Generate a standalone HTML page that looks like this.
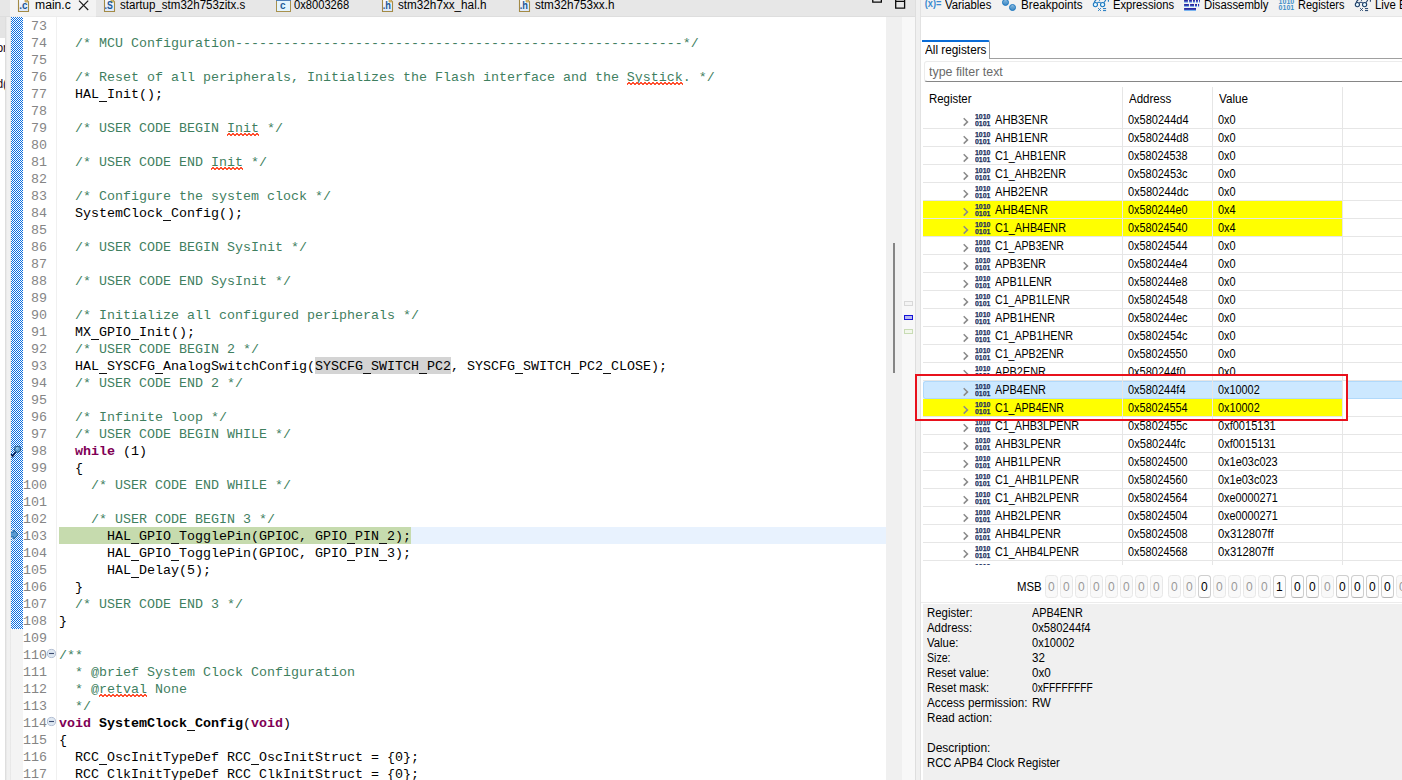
<!DOCTYPE html>
<html>
<head>
<meta charset="utf-8">
<title>IDE</title>
<style>
html,body{margin:0;padding:0;overflow:hidden;}
#root{position:relative;width:1402px;height:780px;overflow:hidden;background:#fff;}
body{width:1402px;height:780px;position:relative;overflow:hidden;background:#fff;
 font-family:"Liberation Sans",sans-serif;font-size:12px;color:#000;}
div,span{box-sizing:border-box;}
.abs{position:absolute;}

/* ---------- left editor ---------- */
#edtabs{position:absolute;left:0;top:0;width:916px;height:17px;background:#e7e7e7;border-bottom:1px solid #dedede;}
#acttab{position:absolute;left:10px;top:0;width:86px;height:17px;background:#f3f3f3;border-bottom:1px solid #ececec;}
.tt{position:absolute;top:-3px;font-size:12.4px;line-height:16px;white-space:nowrap;color:#000;}
#leftw{position:absolute;left:0;top:38.5px;width:5px;height:742px;background:#fff;}
#leftg{position:absolute;left:0;top:17px;width:5px;height:21px;background:#e4e4e4;}
#leftm{position:absolute;left:5px;top:17px;width:18px;height:763px;background:linear-gradient(90deg,#d6d6d6 0,#e6e6e6 1px,#f1f1f1 2.5px,#f1f1f1 4.6px,#e6e6e6 5.4px,#f4f4f4 6px,#f4f4f4 100%);}
#hatch{position:absolute;left:11px;top:17px;width:12px;height:612px;
 background-color:#fff;
 background-image:conic-gradient(#0a6ee2 25%, #ffffff 0 50%, #0a6ee2 0 75%, #ffffff 0);
 background-size:2px 2px;background-position:1px 0;}
#editor{position:absolute;left:23px;top:17px;width:863px;height:763px;background:#fff;}
.ln,.cl{position:absolute;font-family:"Liberation Mono",monospace;font-size:13.333px;line-height:17px;height:17px;white-space:pre;}
.ln{left:15px;width:32px;text-align:right;color:#858585;}
.cl{left:59px;color:#000;}
.c{color:#3f7f5f;}
.k{color:#7f0055;font-weight:bold;}
.cl b{font-weight:bold;}
.occ{background:#d4d4d4;padding-top:2px;}
.u{color:transparent;padding-bottom:3px;background:linear-gradient(currentColor,currentColor) no-repeat 0 14.1px/8px 1.4px;}
.cl .u{background-image:linear-gradient(#111,#111);}
.sq{text-decoration:underline wavy #e02020 1px;text-underline-offset:2px;text-decoration-skip-ink:none;}
#curline{position:absolute;left:59px;top:527px;width:827px;height:17px;background:#e8f2fe;}
#ipline{position:absolute;left:59px;top:527px;width:352px;height:17px;background:#c6dbae;}
#lnsep{position:absolute;left:56px;top:17px;width:1px;height:764px;background:#f0f0f0;}
#vscroll{position:absolute;left:886px;top:17px;width:16px;height:764px;background:#f0f0f0;}
#thumb{position:absolute;left:893px;top:243px;width:2px;height:130px;background:#858585;}
#ovr{position:absolute;left:902px;top:17px;width:13px;height:764px;background:#f8f8f8;}
.om{position:absolute;left:904px;width:9px;height:5px;}
#sash{position:absolute;left:915px;top:0;width:6px;height:780px;background:#f0f0f0;border-left:1px solid #dedede;border-right:1px solid #e2e2e2;}

/* ---------- right panel ---------- */
#rtabs{position:absolute;left:921px;top:0;width:481px;height:17px;background:#f2f2f2;border-bottom:1px solid #e6e6e6;}
#rp{position:absolute;left:921px;top:16px;width:481px;height:764px;background:#fff;}
#alltab{position:absolute;left:921.8px;top:39.5px;width:68.2px;height:19.5px;border-top-right-radius:2px;background:#fff;border-top:2px solid #0a6cd6;border-right:1px solid #a0a0a0;}
#alltabline{position:absolute;left:989px;top:58px;width:413px;height:1px;background:#a0a0a0;}
#filter{position:absolute;left:923.5px;top:61px;width:480px;height:21px;border:1px solid #ececec;border-bottom:1px solid #868686;border-radius:3px;background:#fff;}
.st{position:absolute;white-space:pre;font-size:12px;line-height:15px;height:15px;transform-origin:0 50%;}
.hd{position:absolute;top:91px;white-space:nowrap;font-size:12px;line-height:15px;}
.vl{position:absolute;top:87px;width:1px;height:479px;background:#e6e6e6;}
.rr{position:absolute;left:923px;width:479px;height:18px;border-bottom:1px solid #e6e6e6;}
.rr.yel{background:linear-gradient(#ffff00,#ffff00) no-repeat 0 0/419px 17px;}
.rr.sel{background:#cce8ff;border:1px solid #b0d9fb;border-right:none;border-radius:2.5px 0 0 2.5px;height:18px;}
.abs svg{display:block;}
#tblclip{position:absolute;left:0;top:0;width:1402px;height:567px;overflow:hidden;}
#redbox{position:absolute;left:921px;top:376px;width:425px;height:43px;background:#fff;overflow:hidden;}
#redfr{position:absolute;left:915px;top:374px;width:433px;height:47px;border:2px solid #e8111c;}
#redin{position:absolute;left:-921px;top:-376px;width:1402px;height:780px;}
#redin .rr{width:419px;}
#bitrow{position:absolute;left:921px;top:565px;width:481px;height:38px;background:#fff;}
.bit{position:absolute;top:575px;width:12.5px;height:23px;border:1px solid #e8e8e8;border-radius:3.5px;background:#f9f9f9;color:#9a9a9a;font-size:12px;line-height:15px;padding-top:4px;text-align:center;overflow:hidden;}
.bit.en{border-color:#cfcfcf;border-bottom-color:#b4b4b4;background:#fdfdfd;color:#000;}
#det{position:absolute;left:921px;top:602px;width:481px;height:178px;background:#fff;border-top:1px solid #ececec;}
#det2{position:absolute;left:923px;top:604px;width:479px;height:176px;background:#f0f0f0;}
.dl{position:absolute;white-space:nowrap;font-size:12px;line-height:15px;}
</style>
</head>
<body>
<div id="root">

<!-- ===== editor tab bar ===== -->
<div id="edtabs"></div>
<div id="acttab"></div>
<div id="edtabtext">
<svg class="abs" style="left:17px;top:0" width="13" height="13" viewBox="0 0 13 13"><defs><linearGradient id="fg17" x1="0" y1="0" x2="0" y2="1"><stop offset="0" stop-color="#fbfcff"/><stop offset="1" stop-color="#dbe7fa"/></linearGradient></defs><path d="M1.5 -1 H8.5 L11.5 1.8 V11.5 H1.5 Z" fill="url(#fg17)" stroke="#a38a45" stroke-width="1.1"/><path d="M8 -1 V2 H11.5" fill="#d9b96a" stroke="#c4a254" stroke-width="0.8"/><text x="2.2" y="9" font-family="Liberation Sans" font-size="10.5" font-weight="bold" fill="#1a5796" textLength="8.2" lengthAdjust="spacingAndGlyphs">.c</text></svg>
<svg class="abs" style="left:78px;top:0" width="12" height="11" viewBox="0 0 12 11"><path d="M1 0.6 L10.2 10 M10.2 0.6 L1 10" stroke="#1a1a1a" stroke-width="1.15" fill="none"/></svg>
<svg class="abs" style="left:103px;top:0" width="13" height="13" viewBox="0 0 13 13"><defs><linearGradient id="fg103" x1="0" y1="0" x2="0" y2="1"><stop offset="0" stop-color="#fbfcff"/><stop offset="1" stop-color="#dbe7fa"/></linearGradient></defs><path d="M1.5 -1 H8.5 L11.5 1.8 V11.5 H1.5 Z" fill="url(#fg103)" stroke="#a38a45" stroke-width="1.1"/><path d="M8 -1 V2 H11.5" fill="#d9b96a" stroke="#c4a254" stroke-width="0.8"/><text x="1.6" y="9" font-family="Liberation Sans" font-size="10.5" font-weight="bold" fill="#1a5796" textLength="8.2" lengthAdjust="spacingAndGlyphs">.S</text></svg>
<svg class="abs" style="left:275px;top:0" width="17" height="13" viewBox="0 0 17 13"><rect x="1.5" y="0" width="14" height="11.5" fill="#e4f4fc" stroke="#a8914e" stroke-width="1"/><rect x="1" y="-1" width="15" height="2" fill="#4f7fb8"/><text x="5" y="9" font-family="Liberation Sans" font-size="10" font-weight="bold" fill="#1f5c99">c</text></svg>
<svg class="abs" style="left:381px;top:0" width="13" height="13" viewBox="0 0 13 13"><defs><linearGradient id="fg381" x1="0" y1="0" x2="0" y2="1"><stop offset="0" stop-color="#fbfcff"/><stop offset="1" stop-color="#dbe7fa"/></linearGradient></defs><path d="M1.5 -1 H8.5 L11.5 1.8 V11.5 H1.5 Z" fill="url(#fg381)" stroke="#a38a45" stroke-width="1.1"/><path d="M8 -1 V2 H11.5" fill="#d9b96a" stroke="#c4a254" stroke-width="0.8"/><text x="1.8" y="9" font-family="Liberation Sans" font-size="10.5" font-weight="bold" fill="#1a5796" textLength="8.2" lengthAdjust="spacingAndGlyphs">.h</text></svg>
<svg class="abs" style="left:518px;top:0" width="13" height="13" viewBox="0 0 13 13"><defs><linearGradient id="fg518" x1="0" y1="0" x2="0" y2="1"><stop offset="0" stop-color="#fbfcff"/><stop offset="1" stop-color="#dbe7fa"/></linearGradient></defs><path d="M1.5 -1 H8.5 L11.5 1.8 V11.5 H1.5 Z" fill="url(#fg518)" stroke="#a38a45" stroke-width="1.1"/><path d="M8 -1 V2 H11.5" fill="#d9b96a" stroke="#c4a254" stroke-width="0.8"/><text x="1.8" y="9" font-family="Liberation Sans" font-size="10.5" font-weight="bold" fill="#1a5796" textLength="8.2" lengthAdjust="spacingAndGlyphs">.h</text></svg>
<svg class="abs" style="left:871px;top:0" width="13" height="5" viewBox="0 0 13 5"><path d="M1.75 -1 V2.05 H10.35 V-1" fill="none" stroke="#0a0a0a" stroke-width="1.3"/></svg>
<svg class="abs" style="left:894px;top:0" width="13" height="11" viewBox="0 0 13 11"><path d="M1.7 -1 V8.2 H10.6 V-1 M1.7 1.4 H10.6" fill="none" stroke="#0a0a0a" stroke-width="1.3"/></svg>
</div>

<!-- ===== left gutter ===== -->
<div id="leftw"></div>
<div id="leftg"></div>
<div class="st" style="left:-3.6px;top:41px;width:8.6px;overflow:hidden;color:#1a0a18;">or</div>
<div class="st" style="left:-3.6px;top:77px;width:8.6px;overflow:hidden;color:#1a0a18;">d(</div>
<div id="leftm"></div>

<!-- ===== editor body ===== -->
<div id="editor"></div>
<div id="hatch"></div>
<div id="lnsep"></div>
<div id="curline"></div>
<div id="ipline"></div>
<div class="ln" style="top:18px">73</div>
<div class="ln" style="top:35px">74</div>
<div class="cl" style="top:35px">  <span class="c">/* MCU Configuration--------------------------------------------------------*/</span></div>
<div class="ln" style="top:52px">75</div>
<div class="ln" style="top:69px">76</div>
<div class="cl" style="top:69px">  <span class="c">/* Reset of all peripherals, Initializes the Flash interface and the Systick. */</span></div>
<div class="ln" style="top:86px">77</div>
<div class="cl" style="top:86px">  HAL<span class="u">_</span>Init();</div>
<div class="ln" style="top:103px">78</div>
<div class="ln" style="top:120px">79</div>
<div class="cl" style="top:120px">  <span class="c">/* USER CODE BEGIN Init */</span></div>
<div class="ln" style="top:137px">80</div>
<div class="ln" style="top:154px">81</div>
<div class="cl" style="top:154px">  <span class="c">/* USER CODE END Init */</span></div>
<div class="ln" style="top:171px">82</div>
<div class="ln" style="top:188px">83</div>
<div class="cl" style="top:188px">  <span class="c">/* Configure the system clock */</span></div>
<div class="ln" style="top:205px">84</div>
<div class="cl" style="top:205px">  SystemClock<span class="u">_</span>Config();</div>
<div class="ln" style="top:222px">85</div>
<div class="ln" style="top:239px">86</div>
<div class="cl" style="top:239px">  <span class="c">/* USER CODE BEGIN SysInit */</span></div>
<div class="ln" style="top:256px">87</div>
<div class="ln" style="top:273px">88</div>
<div class="cl" style="top:273px">  <span class="c">/* USER CODE END SysInit */</span></div>
<div class="ln" style="top:290px">89</div>
<div class="ln" style="top:307px">90</div>
<div class="cl" style="top:307px">  <span class="c">/* Initialize all configured peripherals */</span></div>
<div class="ln" style="top:324px">91</div>
<div class="cl" style="top:324px">  MX<span class="u">_</span>GPIO<span class="u">_</span>Init();</div>
<div class="ln" style="top:341px">92</div>
<div class="cl" style="top:341px">  <span class="c">/* USER CODE BEGIN 2 */</span></div>
<div class="ln" style="top:358px">93</div>
<div class="cl" style="top:358px">  HAL<span class="u">_</span>SYSCFG<span class="u">_</span>AnalogSwitchConfig(<span class="occ">SYSCFG<span class="u">_</span>SWITCH<span class="u">_</span>PC2</span>, SYSCFG<span class="u">_</span>SWITCH<span class="u">_</span>PC2<span class="u">_</span>CLOSE);</div>
<div class="ln" style="top:375px">94</div>
<div class="cl" style="top:375px">  <span class="c">/* USER CODE END 2 */</span></div>
<div class="ln" style="top:392px">95</div>
<div class="ln" style="top:409px">96</div>
<div class="cl" style="top:409px">  <span class="c">/* Infinite loop */</span></div>
<div class="ln" style="top:426px">97</div>
<div class="cl" style="top:426px">  <span class="c">/* USER CODE BEGIN WHILE */</span></div>
<div class="ln" style="top:443px">98</div>
<div class="cl" style="top:443px">  <span class="k">while</span> (1)</div>
<div class="ln" style="top:460px">99</div>
<div class="cl" style="top:460px">  {</div>
<div class="ln" style="top:477px">100</div>
<div class="cl" style="top:477px">    <span class="c">/* USER CODE END WHILE */</span></div>
<div class="ln" style="top:494px">101</div>
<div class="ln" style="top:511px">102</div>
<div class="cl" style="top:511px">    <span class="c">/* USER CODE BEGIN 3 */</span></div>
<div class="ln" style="top:528px">103</div>
<div class="cl" style="top:528px">      HAL<span class="u">_</span>GPIO<span class="u">_</span>TogglePin(GPIOC, GPIO<span class="u">_</span>PIN<span class="u">_</span>2);</div>
<div class="ln" style="top:545px">104</div>
<div class="cl" style="top:545px">      HAL<span class="u">_</span>GPIO<span class="u">_</span>TogglePin(GPIOC, GPIO<span class="u">_</span>PIN<span class="u">_</span>3);</div>
<div class="ln" style="top:562px">105</div>
<div class="cl" style="top:562px">      HAL<span class="u">_</span>Delay(5);</div>
<div class="ln" style="top:579px">106</div>
<div class="cl" style="top:579px">  }</div>
<div class="ln" style="top:596px">107</div>
<div class="cl" style="top:596px">  <span class="c">/* USER CODE END 3 */</span></div>
<div class="ln" style="top:613px">108</div>
<div class="cl" style="top:613px">}</div>
<div class="ln" style="top:630px">109</div>
<div class="ln" style="top:647px">110</div>
<div class="cl" style="top:647px"><span class="c">/**</span></div>
<div class="ln" style="top:664px">111</div>
<div class="cl" style="top:664px">  <span class="c">* @brief System Clock Configuration</span></div>
<div class="ln" style="top:681px">112</div>
<div class="cl" style="top:681px">  <span class="c">* @retval None</span></div>
<div class="ln" style="top:698px">113</div>
<div class="cl" style="top:698px">  <span class="c">*/</span></div>
<div class="ln" style="top:715px">114</div>
<div class="cl" style="top:715px"><span class="k">void</span> <b>SystemClock<span class="u">_</span>Config</b>(<span class="k">void</span>)</div>
<div class="ln" style="top:732px">115</div>
<div class="cl" style="top:732px">{</div>
<div class="ln" style="top:749px">116</div>
<div class="cl" style="top:749px">  RCC<span class="u">_</span>OscInitTypeDef RCC<span class="u">_</span>OscInitStruct = {0};</div>
<div class="ln" style="top:766px">117</div>
<div class="cl" style="top:766px">  RCC<span class="u">_</span>ClkInitTypeDef RCC<span class="u">_</span>ClkInitStruct = {0};</div>
<svg class="abs" style="left:627px;top:82px" width="57" height="4" viewBox="0 0 57 4"><polyline points="0,2.6 2,0.6 4,2.6 6,0.6 8,2.6 10,0.6 12,2.6 14,0.6 16,2.6 18,0.6 20,2.6 22,0.6 24,2.6 26,0.6 28,2.6 30,0.6 32,2.6 34,0.6 36,2.6 38,0.6 40,2.6 42,0.6 44,2.6 46,0.6 48,2.6 50,0.6 52,2.6 54,0.6 56,2.6" fill="none" stroke="#ff5030" stroke-width="1" shape-rendering="crispEdges"/></svg>
<svg class="abs" style="left:227px;top:133px" width="33" height="4" viewBox="0 0 33 4"><polyline points="0,2.6 2,0.6 4,2.6 6,0.6 8,2.6 10,0.6 12,2.6 14,0.6 16,2.6 18,0.6 20,2.6 22,0.6 24,2.6 26,0.6 28,2.6 30,0.6 32,2.6" fill="none" stroke="#ff5030" stroke-width="1" shape-rendering="crispEdges"/></svg>
<svg class="abs" style="left:211px;top:167px" width="33" height="4" viewBox="0 0 33 4"><polyline points="0,2.6 2,0.6 4,2.6 6,0.6 8,2.6 10,0.6 12,2.6 14,0.6 16,2.6 18,0.6 20,2.6 22,0.6 24,2.6 26,0.6 28,2.6 30,0.6 32,2.6" fill="none" stroke="#ff5030" stroke-width="1" shape-rendering="crispEdges"/></svg>
<svg class="abs" style="left:99px;top:694px" width="49" height="4" viewBox="0 0 49 4"><polyline points="0,2.6 2,0.6 4,2.6 6,0.6 8,2.6 10,0.6 12,2.6 14,0.6 16,2.6 18,0.6 20,2.6 22,0.6 24,2.6 26,0.6 28,2.6 30,0.6 32,2.6 34,0.6 36,2.6 38,0.6 40,2.6 42,0.6 44,2.6 46,0.6 48,2.6" fill="none" stroke="#ff5030" stroke-width="1" shape-rendering="crispEdges"/></svg>

<!-- fold icons -->
<svg class="abs" style="left:46px;top:648px" width="11" height="11" viewBox="0 0 11 11"><circle cx="5.45" cy="5.5" r="4.1" fill="#dfe8f2" stroke="#aab7cd" stroke-width="0.9"/><path d="M3 5.5 H8" stroke="#3a4a70" stroke-width="1.1"/></svg>
<svg class="abs" style="left:46px;top:716px" width="11" height="11" viewBox="0 0 11 11"><circle cx="5.45" cy="5.5" r="4.1" fill="#dfe8f2" stroke="#aab7cd" stroke-width="0.9"/><path d="M3 5.5 H8" stroke="#3a4a70" stroke-width="1.1"/></svg>

<!-- gutter icons -->
<svg class="abs" style="left:10px;top:443px" width="14" height="15" viewBox="0 0 14 15"><circle cx="7.6" cy="6.2" r="3.1" fill="#5c9fd0" stroke="#1f4f80" stroke-width="1"/><circle cx="7.1" cy="5.5" r="1.2" fill="#8fc0e4"/><path d="M1.2 11.2 L2.6 13.4 L5.6 9" fill="none" stroke="#0f2050" stroke-width="1.5"/></svg>
<svg class="abs" style="left:11px;top:528px" width="10" height="13" viewBox="0 0 10 13"><path d="M-1 4 H2.8 V1.6 L7.4 6.5 L2.8 11.4 V9 H-1 Z" fill="#5a9ad0" stroke="#fff" stroke-width="2.2"/><path d="M-1 4 H2.8 V1.6 L7.4 6.5 L2.8 11.4 V9 H-1 Z" fill="#5a9ad0" stroke="#0a5aa0" stroke-width="1"/></svg>

<div id="vscroll"></div>
<div id="thumb"></div>
<div id="ovr"></div>
<div class="om" style="top:301px;border:1px solid #d8d8d8;background:#f4f4f4"></div>
<div class="om" style="top:315px;border:1px solid #1414d8;background:#b8b8f0"></div>
<div class="om" style="top:329px;border:1px solid #c8dcb4;background:#f2f7ec"></div>
<div id="sash"></div>

<!-- ===== right panel ===== -->
<div id="rp"></div>
<div id="rtabs"></div>
<div id="rtabtext">
<svg class="abs" style="left:996px;top:0" width="24" height="13" viewBox="0 0 24 13"><defs><linearGradient id="bpg" x1="0" y1="0" x2="0" y2="1"><stop offset="0" stop-color="#9cc4e4"/><stop offset="0.5" stop-color="#5f9fd0"/><stop offset="1" stop-color="#3f88c4"/></linearGradient></defs><circle cx="9.5" cy="2.4" r="3" fill="url(#bpg)" stroke="#1c78c0" stroke-width="1"/><circle cx="16.5" cy="7.5" r="3" fill="url(#bpg)" stroke="#1c78c0" stroke-width="1"/></svg>
<svg class="abs" style="left:1088px;top:0" width="24" height="13" viewBox="0 0 24 13"><g fill="#e6f8ff" stroke="#1c78c0" stroke-width="1.1"><circle cx="7.4" cy="4.6" r="2.1"/><circle cx="14.6" cy="4.6" r="2.1"/></g><g fill="none" stroke="#1c78c0" stroke-width="1.1"><path d="M9.3 2.6 Q11 1.9 12.7 2.6 M6.2 2.6 Q7 0.4 8.6 -0.6 M15.8 2.6 Q17.4 1.2 17.8 -0.6 M11.5 -1 V0.8 M20.4 -1 V1.8"/><path d="M10.2 8.2 L12.8 10.8 M12.8 8.2 L10.2 10.8" stroke-width="1"/><path d="M15 8.6 H18.1 M15 10.6 H18.1" stroke-width="1"/></g></svg>
<svg class="abs" style="left:1178px;top:0" width="24" height="13" viewBox="0 0 24 13"><g fill="#7ab4f0"><rect x="6.1" y="0.8" width="3.8" height="2"/><rect x="11.1" y="0.8" width="2.8" height="2"/><rect x="15" y="0.8" width="1.9" height="2"/><rect x="18" y="0.8" width="1.9" height="2"/><rect x="21.1" y="0.8" width="0.9" height="2"/><rect x="6.1" y="4.8" width="4.8" height="2.2"/><rect x="12.1" y="4.8" width="3.9" height="2.2"/><rect x="17" y="4.8" width="2" height="2.2"/><rect x="20" y="4.8" width="1.1" height="2.2"/><rect x="6.1" y="8.8" width="11.9" height="2.2"/></g><g fill="#2a2aa0"><rect x="6.1" y="0" width="3.8" height="1.6"/><rect x="11.1" y="0" width="2.8" height="1.6"/><rect x="15" y="0" width="1.9" height="1.6"/><rect x="18" y="0" width="1.9" height="1.6"/><rect x="21.1" y="0" width="0.9" height="1.6"/><rect x="6.1" y="4" width="4.8" height="1.8"/><rect x="12.1" y="4" width="3.9" height="1.8"/><rect x="17" y="4" width="2" height="1.8"/><rect x="20" y="4" width="1.1" height="1.8"/><rect x="6.1" y="8" width="11.9" height="1.8"/></g></svg>
<svg class="abs" style="left:1274px;top:0" width="24" height="13" viewBox="0 0 24 13"><g font-family="Liberation Sans" font-size="7" font-weight="bold" fill="#3d8fc8"><text x="4.6" y="4" textLength="15.6" lengthAdjust="spacingAndGlyphs">1010</text><text x="4.6" y="10" textLength="15.6" lengthAdjust="spacingAndGlyphs">0101</text></g></svg>
<svg class="abs" style="left:1350px;top:0" width="24" height="13" viewBox="0 0 24 13"><g fill="#e6f8ff" stroke="#1f3f68" stroke-width="1.1"><circle cx="7.4" cy="4.6" r="2.1"/><circle cx="14.6" cy="4.6" r="2.1"/></g><g fill="none" stroke="#1f3f68" stroke-width="1.1"><path d="M9.3 2.6 Q11 1.9 12.7 2.6 M6.2 2.6 Q7 0.4 8.6 -0.6 M15.8 2.6 Q17.4 1.2 17.8 -0.6 M11.5 -1 V0.8 M20.4 -1 V1.8"/><path d="M10.2 8.2 L12.8 10.8 M12.8 8.2 L10.2 10.8" stroke-width="1"/><path d="M15 8.6 H18.1 M15 10.6 H18.1" stroke-width="1"/></g></svg>
</div>

<div id="alltab"></div>
<div id="alltabline"></div>
<div id="filter"></div>

<div id="tblclip">
<div class="rr" style="top:111px"></div><div class="abs" style="left:963px;top:116.5px"><svg class="ch" width="7" height="10" viewBox="0 0 7 10"><path d="M0.7 1.2 L4.5 4.9 L0.7 8.6" fill="none" stroke="#8a8a8a" stroke-width="1.5"/></svg></div><div class="abs" style="left:975px;top:114px"><svg class="ri" width="17" height="13" viewBox="0 0 17 13"><g font-family="Liberation Sans" font-size="7" font-weight="bold" fill="#1c315e" stroke="#1c315e" stroke-width="0.25"><text x="0" y="5" textLength="15.4" lengthAdjust="spacingAndGlyphs">1010</text><text x="0" y="11.6" textLength="15.4" lengthAdjust="spacingAndGlyphs">0101</text></g></svg></div><div class="st" style="left:994.5px;top:113px;transform:scaleX(0.9350);">AHB3ENR</div><div class="st" style="left:1128.1px;top:113px;transform:scaleX(0.9156);">0x580244d4</div><div class="st" style="left:1218.0px;top:113px;transform:scaleX(0.9143);">0x0</div>
<div class="rr" style="top:129px"></div><div class="abs" style="left:963px;top:134.5px"><svg class="ch" width="7" height="10" viewBox="0 0 7 10"><path d="M0.7 1.2 L4.5 4.9 L0.7 8.6" fill="none" stroke="#8a8a8a" stroke-width="1.5"/></svg></div><div class="abs" style="left:975px;top:132px"><svg class="ri" width="17" height="13" viewBox="0 0 17 13"><g font-family="Liberation Sans" font-size="7" font-weight="bold" fill="#1c315e" stroke="#1c315e" stroke-width="0.25"><text x="0" y="5" textLength="15.4" lengthAdjust="spacingAndGlyphs">1010</text><text x="0" y="11.6" textLength="15.4" lengthAdjust="spacingAndGlyphs">0101</text></g></svg></div><div class="st" style="left:994.5px;top:131px;transform:scaleX(0.9350);">AHB1ENR</div><div class="st" style="left:1128.1px;top:131px;transform:scaleX(0.9156);">0x580244d8</div><div class="st" style="left:1218.0px;top:131px;transform:scaleX(0.9143);">0x0</div>
<div class="rr" style="top:147px"></div><div class="abs" style="left:963px;top:152.5px"><svg class="ch" width="7" height="10" viewBox="0 0 7 10"><path d="M0.7 1.2 L4.5 4.9 L0.7 8.6" fill="none" stroke="#8a8a8a" stroke-width="1.5"/></svg></div><div class="abs" style="left:975px;top:150px"><svg class="ri" width="17" height="13" viewBox="0 0 17 13"><g font-family="Liberation Sans" font-size="7" font-weight="bold" fill="#1c315e" stroke="#1c315e" stroke-width="0.25"><text x="0" y="5" textLength="15.4" lengthAdjust="spacingAndGlyphs">1010</text><text x="0" y="11.6" textLength="15.4" lengthAdjust="spacingAndGlyphs">0101</text></g></svg></div><div class="st" style="left:994.5px;top:149px;transform:scaleX(0.9021);">C1_AHB1ENR</div><div class="st" style="left:1128.1px;top:149px;transform:scaleX(0.9004);">0x58024538</div><div class="st" style="left:1218.0px;top:149px;transform:scaleX(0.9143);">0x0</div>
<div class="rr" style="top:165px"></div><div class="abs" style="left:963px;top:170.5px"><svg class="ch" width="7" height="10" viewBox="0 0 7 10"><path d="M0.7 1.2 L4.5 4.9 L0.7 8.6" fill="none" stroke="#8a8a8a" stroke-width="1.5"/></svg></div><div class="abs" style="left:975px;top:168px"><svg class="ri" width="17" height="13" viewBox="0 0 17 13"><g font-family="Liberation Sans" font-size="7" font-weight="bold" fill="#1c315e" stroke="#1c315e" stroke-width="0.25"><text x="0" y="5" textLength="15.4" lengthAdjust="spacingAndGlyphs">1010</text><text x="0" y="11.6" textLength="15.4" lengthAdjust="spacingAndGlyphs">0101</text></g></svg></div><div class="st" style="left:994.5px;top:167px;transform:scaleX(0.9021);">C1_AHB2ENR</div><div class="st" style="left:1128.1px;top:167px;transform:scaleX(0.9099);">0x5802453c</div><div class="st" style="left:1218.0px;top:167px;transform:scaleX(0.9143);">0x0</div>
<div class="rr" style="top:183px"></div><div class="abs" style="left:963px;top:188.5px"><svg class="ch" width="7" height="10" viewBox="0 0 7 10"><path d="M0.7 1.2 L4.5 4.9 L0.7 8.6" fill="none" stroke="#8a8a8a" stroke-width="1.5"/></svg></div><div class="abs" style="left:975px;top:186px"><svg class="ri" width="17" height="13" viewBox="0 0 17 13"><g font-family="Liberation Sans" font-size="7" font-weight="bold" fill="#1c315e" stroke="#1c315e" stroke-width="0.25"><text x="0" y="5" textLength="15.4" lengthAdjust="spacingAndGlyphs">1010</text><text x="0" y="11.6" textLength="15.4" lengthAdjust="spacingAndGlyphs">0101</text></g></svg></div><div class="st" style="left:994.5px;top:185px;transform:scaleX(0.9350);">AHB2ENR</div><div class="st" style="left:1128.1px;top:185px;transform:scaleX(0.9252);">0x580244dc</div><div class="st" style="left:1218.0px;top:185px;transform:scaleX(0.9143);">0x0</div>
<div class="rr yel" style="top:201px"></div><div class="abs" style="left:963px;top:206.5px"><svg class="ch" width="7" height="10" viewBox="0 0 7 10"><path d="M0.7 1.2 L4.5 4.9 L0.7 8.6" fill="none" stroke="#8a8a8a" stroke-width="1.5"/></svg></div><div class="abs" style="left:975px;top:204px"><svg class="ri" width="17" height="13" viewBox="0 0 17 13"><g font-family="Liberation Sans" font-size="7" font-weight="bold" fill="#1c315e" stroke="#1c315e" stroke-width="0.25"><text x="0" y="5" textLength="15.4" lengthAdjust="spacingAndGlyphs">1010</text><text x="0" y="11.6" textLength="15.4" lengthAdjust="spacingAndGlyphs">0101</text></g></svg></div><div class="st" style="left:994.5px;top:203px;transform:scaleX(0.9350);">AHB4ENR</div><div class="st" style="left:1128.1px;top:203px;transform:scaleX(0.9004);">0x580244e0</div><div class="st" style="left:1218.0px;top:203px;transform:scaleX(0.9143);">0x4</div>
<div class="rr yel" style="top:219px"></div><div class="abs" style="left:963px;top:224.5px"><svg class="ch" width="7" height="10" viewBox="0 0 7 10"><path d="M0.7 1.2 L4.5 4.9 L0.7 8.6" fill="none" stroke="#8a8a8a" stroke-width="1.5"/></svg></div><div class="abs" style="left:975px;top:222px"><svg class="ri" width="17" height="13" viewBox="0 0 17 13"><g font-family="Liberation Sans" font-size="7" font-weight="bold" fill="#1c315e" stroke="#1c315e" stroke-width="0.25"><text x="0" y="5" textLength="15.4" lengthAdjust="spacingAndGlyphs">1010</text><text x="0" y="11.6" textLength="15.4" lengthAdjust="spacingAndGlyphs">0101</text></g></svg></div><div class="st" style="left:994.5px;top:221px;transform:scaleX(0.9021);">C1_AHB4ENR</div><div class="st" style="left:1128.1px;top:221px;transform:scaleX(0.9004);">0x58024540</div><div class="st" style="left:1218.0px;top:221px;transform:scaleX(0.9143);">0x4</div>
<div class="rr" style="top:237px"></div><div class="abs" style="left:963px;top:242.5px"><svg class="ch" width="7" height="10" viewBox="0 0 7 10"><path d="M0.7 1.2 L4.5 4.9 L0.7 8.6" fill="none" stroke="#8a8a8a" stroke-width="1.5"/></svg></div><div class="abs" style="left:975px;top:240px"><svg class="ri" width="17" height="13" viewBox="0 0 17 13"><g font-family="Liberation Sans" font-size="7" font-weight="bold" fill="#1c315e" stroke="#1c315e" stroke-width="0.25"><text x="0" y="5" textLength="15.4" lengthAdjust="spacingAndGlyphs">1010</text><text x="0" y="11.6" textLength="15.4" lengthAdjust="spacingAndGlyphs">0101</text></g></svg></div><div class="st" style="left:994.5px;top:239px;transform:scaleX(0.8841);">C1_APB3ENR</div><div class="st" style="left:1128.1px;top:239px;transform:scaleX(0.9004);">0x58024544</div><div class="st" style="left:1218.0px;top:239px;transform:scaleX(0.9143);">0x0</div>
<div class="rr" style="top:255px"></div><div class="abs" style="left:963px;top:260.5px"><svg class="ch" width="7" height="10" viewBox="0 0 7 10"><path d="M0.7 1.2 L4.5 4.9 L0.7 8.6" fill="none" stroke="#8a8a8a" stroke-width="1.5"/></svg></div><div class="abs" style="left:975px;top:258px"><svg class="ri" width="17" height="13" viewBox="0 0 17 13"><g font-family="Liberation Sans" font-size="7" font-weight="bold" fill="#1c315e" stroke="#1c315e" stroke-width="0.25"><text x="0" y="5" textLength="15.4" lengthAdjust="spacingAndGlyphs">1010</text><text x="0" y="11.6" textLength="15.4" lengthAdjust="spacingAndGlyphs">0101</text></g></svg></div><div class="st" style="left:994.5px;top:257px;transform:scaleX(0.9102);">APB3ENR</div><div class="st" style="left:1128.1px;top:257px;transform:scaleX(0.9004);">0x580244e4</div><div class="st" style="left:1218.0px;top:257px;transform:scaleX(0.9143);">0x0</div>
<div class="rr" style="top:273px"></div><div class="abs" style="left:963px;top:278.5px"><svg class="ch" width="7" height="10" viewBox="0 0 7 10"><path d="M0.7 1.2 L4.5 4.9 L0.7 8.6" fill="none" stroke="#8a8a8a" stroke-width="1.5"/></svg></div><div class="abs" style="left:975px;top:276px"><svg class="ri" width="17" height="13" viewBox="0 0 17 13"><g font-family="Liberation Sans" font-size="7" font-weight="bold" fill="#1c315e" stroke="#1c315e" stroke-width="0.25"><text x="0" y="5" textLength="15.4" lengthAdjust="spacingAndGlyphs">1010</text><text x="0" y="11.6" textLength="15.4" lengthAdjust="spacingAndGlyphs">0101</text></g></svg></div><div class="st" style="left:994.5px;top:275px;transform:scaleX(0.9090);">APB1LENR</div><div class="st" style="left:1128.1px;top:275px;transform:scaleX(0.9004);">0x580244e8</div><div class="st" style="left:1218.0px;top:275px;transform:scaleX(0.9143);">0x0</div>
<div class="rr" style="top:291px"></div><div class="abs" style="left:963px;top:296.5px"><svg class="ch" width="7" height="10" viewBox="0 0 7 10"><path d="M0.7 1.2 L4.5 4.9 L0.7 8.6" fill="none" stroke="#8a8a8a" stroke-width="1.5"/></svg></div><div class="abs" style="left:975px;top:294px"><svg class="ri" width="17" height="13" viewBox="0 0 17 13"><g font-family="Liberation Sans" font-size="7" font-weight="bold" fill="#1c315e" stroke="#1c315e" stroke-width="0.25"><text x="0" y="5" textLength="15.4" lengthAdjust="spacingAndGlyphs">1010</text><text x="0" y="11.6" textLength="15.4" lengthAdjust="spacingAndGlyphs">0101</text></g></svg></div><div class="st" style="left:994.5px;top:293px;transform:scaleX(0.8853);">C1_APB1LENR</div><div class="st" style="left:1128.1px;top:293px;transform:scaleX(0.9004);">0x58024548</div><div class="st" style="left:1218.0px;top:293px;transform:scaleX(0.9143);">0x0</div>
<div class="rr" style="top:309px"></div><div class="abs" style="left:963px;top:314.5px"><svg class="ch" width="7" height="10" viewBox="0 0 7 10"><path d="M0.7 1.2 L4.5 4.9 L0.7 8.6" fill="none" stroke="#8a8a8a" stroke-width="1.5"/></svg></div><div class="abs" style="left:975px;top:312px"><svg class="ri" width="17" height="13" viewBox="0 0 17 13"><g font-family="Liberation Sans" font-size="7" font-weight="bold" fill="#1c315e" stroke="#1c315e" stroke-width="0.25"><text x="0" y="5" textLength="15.4" lengthAdjust="spacingAndGlyphs">1010</text><text x="0" y="11.6" textLength="15.4" lengthAdjust="spacingAndGlyphs">0101</text></g></svg></div><div class="st" style="left:994.5px;top:311px;transform:scaleX(0.9275);">APB1HENR</div><div class="st" style="left:1128.1px;top:311px;transform:scaleX(0.9099);">0x580244ec</div><div class="st" style="left:1218.0px;top:311px;transform:scaleX(0.9143);">0x0</div>
<div class="rr" style="top:327px"></div><div class="abs" style="left:963px;top:332.5px"><svg class="ch" width="7" height="10" viewBox="0 0 7 10"><path d="M0.7 1.2 L4.5 4.9 L0.7 8.6" fill="none" stroke="#8a8a8a" stroke-width="1.5"/></svg></div><div class="abs" style="left:975px;top:330px"><svg class="ri" width="17" height="13" viewBox="0 0 17 13"><g font-family="Liberation Sans" font-size="7" font-weight="bold" fill="#1c315e" stroke="#1c315e" stroke-width="0.25"><text x="0" y="5" textLength="15.4" lengthAdjust="spacingAndGlyphs">1010</text><text x="0" y="11.6" textLength="15.4" lengthAdjust="spacingAndGlyphs">0101</text></g></svg></div><div class="st" style="left:994.5px;top:329px;transform:scaleX(0.8996);">C1_APB1HENR</div><div class="st" style="left:1128.1px;top:329px;transform:scaleX(0.9099);">0x5802454c</div><div class="st" style="left:1218.0px;top:329px;transform:scaleX(0.9143);">0x0</div>
<div class="rr" style="top:345px"></div><div class="abs" style="left:963px;top:350.5px"><svg class="ch" width="7" height="10" viewBox="0 0 7 10"><path d="M0.7 1.2 L4.5 4.9 L0.7 8.6" fill="none" stroke="#8a8a8a" stroke-width="1.5"/></svg></div><div class="abs" style="left:975px;top:348px"><svg class="ri" width="17" height="13" viewBox="0 0 17 13"><g font-family="Liberation Sans" font-size="7" font-weight="bold" fill="#1c315e" stroke="#1c315e" stroke-width="0.25"><text x="0" y="5" textLength="15.4" lengthAdjust="spacingAndGlyphs">1010</text><text x="0" y="11.6" textLength="15.4" lengthAdjust="spacingAndGlyphs">0101</text></g></svg></div><div class="st" style="left:994.5px;top:347px;transform:scaleX(0.8841);">C1_APB2ENR</div><div class="st" style="left:1128.1px;top:347px;transform:scaleX(0.9004);">0x58024550</div><div class="st" style="left:1218.0px;top:347px;transform:scaleX(0.9143);">0x0</div>
<div class="rr" style="top:363px"></div><div class="abs" style="left:963px;top:368.5px"><svg class="ch" width="7" height="10" viewBox="0 0 7 10"><path d="M0.7 1.2 L4.5 4.9 L0.7 8.6" fill="none" stroke="#8a8a8a" stroke-width="1.5"/></svg></div><div class="abs" style="left:975px;top:366px"><svg class="ri" width="17" height="13" viewBox="0 0 17 13"><g font-family="Liberation Sans" font-size="7" font-weight="bold" fill="#1c315e" stroke="#1c315e" stroke-width="0.25"><text x="0" y="5" textLength="15.4" lengthAdjust="spacingAndGlyphs">1010</text><text x="0" y="11.6" textLength="15.4" lengthAdjust="spacingAndGlyphs">0101</text></g></svg></div><div class="st" style="left:994.5px;top:365px;transform:scaleX(0.9102);">APB2ENR</div><div class="st" style="left:1128.1px;top:365px;transform:scaleX(0.9166);">0x580244f0</div><div class="st" style="left:1218.0px;top:365px;transform:scaleX(0.9143);">0x0</div>
<div class="rr sel" style="top:381px"></div><div class="abs" style="left:963px;top:386.5px"><svg class="ch" width="7" height="10" viewBox="0 0 7 10"><path d="M0.7 1.2 L4.5 4.9 L0.7 8.6" fill="none" stroke="#8a8a8a" stroke-width="1.5"/></svg></div><div class="abs" style="left:975px;top:384px"><svg class="ri" width="17" height="13" viewBox="0 0 17 13"><g font-family="Liberation Sans" font-size="7" font-weight="bold" fill="#1c315e" stroke="#1c315e" stroke-width="0.25"><text x="0" y="5" textLength="15.4" lengthAdjust="spacingAndGlyphs">1010</text><text x="0" y="11.6" textLength="15.4" lengthAdjust="spacingAndGlyphs">0101</text></g></svg></div><div class="st" style="left:994.5px;top:383px;transform:scaleX(0.9102);">APB4ENR</div><div class="st" style="left:1128.1px;top:383px;transform:scaleX(0.9166);">0x580244f4</div><div class="st" style="left:1218.0px;top:383px;transform:scaleX(0.9056);">0x10002</div>
<div class="rr yel" style="top:399px"></div><div class="abs" style="left:963px;top:404.5px"><svg class="ch" width="7" height="10" viewBox="0 0 7 10"><path d="M0.7 1.2 L4.5 4.9 L0.7 8.6" fill="none" stroke="#8a8a8a" stroke-width="1.5"/></svg></div><div class="abs" style="left:975px;top:402px"><svg class="ri" width="17" height="13" viewBox="0 0 17 13"><g font-family="Liberation Sans" font-size="7" font-weight="bold" fill="#1c315e" stroke="#1c315e" stroke-width="0.25"><text x="0" y="5" textLength="15.4" lengthAdjust="spacingAndGlyphs">1010</text><text x="0" y="11.6" textLength="15.4" lengthAdjust="spacingAndGlyphs">0101</text></g></svg></div><div class="st" style="left:994.5px;top:401px;transform:scaleX(0.8841);">C1_APB4ENR</div><div class="st" style="left:1128.1px;top:401px;transform:scaleX(0.9004);">0x58024554</div><div class="st" style="left:1218.0px;top:401px;transform:scaleX(0.9056);">0x10002</div>
<div class="rr" style="top:417px"></div><div class="abs" style="left:963px;top:422.5px"><svg class="ch" width="7" height="10" viewBox="0 0 7 10"><path d="M0.7 1.2 L4.5 4.9 L0.7 8.6" fill="none" stroke="#8a8a8a" stroke-width="1.5"/></svg></div><div class="abs" style="left:975px;top:420px"><svg class="ri" width="17" height="13" viewBox="0 0 17 13"><g font-family="Liberation Sans" font-size="7" font-weight="bold" fill="#1c315e" stroke="#1c315e" stroke-width="0.25"><text x="0" y="5" textLength="15.4" lengthAdjust="spacingAndGlyphs">1010</text><text x="0" y="11.6" textLength="15.4" lengthAdjust="spacingAndGlyphs">0101</text></g></svg></div><div class="st" style="left:994.5px;top:419px;transform:scaleX(0.8996);">C1_AHB3LPENR</div><div class="st" style="left:1128.1px;top:419px;transform:scaleX(0.9099);">0x5802455c</div><div class="st" style="left:1218.0px;top:419px;transform:scaleX(0.9198);">0xf0015131</div>
<div class="rr" style="top:435px"></div><div class="abs" style="left:963px;top:440.5px"><svg class="ch" width="7" height="10" viewBox="0 0 7 10"><path d="M0.7 1.2 L4.5 4.9 L0.7 8.6" fill="none" stroke="#8a8a8a" stroke-width="1.5"/></svg></div><div class="abs" style="left:975px;top:438px"><svg class="ri" width="17" height="13" viewBox="0 0 17 13"><g font-family="Liberation Sans" font-size="7" font-weight="bold" fill="#1c315e" stroke="#1c315e" stroke-width="0.25"><text x="0" y="5" textLength="15.4" lengthAdjust="spacingAndGlyphs">1010</text><text x="0" y="11.6" textLength="15.4" lengthAdjust="spacingAndGlyphs">0101</text></g></svg></div><div class="st" style="left:994.5px;top:437px;transform:scaleX(0.9247);">AHB3LPENR</div><div class="st" style="left:1128.1px;top:437px;transform:scaleX(0.9265);">0x580244fc</div><div class="st" style="left:1218.0px;top:437px;transform:scaleX(0.9198);">0xf0015131</div>
<div class="rr" style="top:453px"></div><div class="abs" style="left:963px;top:458.5px"><svg class="ch" width="7" height="10" viewBox="0 0 7 10"><path d="M0.7 1.2 L4.5 4.9 L0.7 8.6" fill="none" stroke="#8a8a8a" stroke-width="1.5"/></svg></div><div class="abs" style="left:975px;top:456px"><svg class="ri" width="17" height="13" viewBox="0 0 17 13"><g font-family="Liberation Sans" font-size="7" font-weight="bold" fill="#1c315e" stroke="#1c315e" stroke-width="0.25"><text x="0" y="5" textLength="15.4" lengthAdjust="spacingAndGlyphs">1010</text><text x="0" y="11.6" textLength="15.4" lengthAdjust="spacingAndGlyphs">0101</text></g></svg></div><div class="st" style="left:994.5px;top:455px;transform:scaleX(0.9247);">AHB1LPENR</div><div class="st" style="left:1128.1px;top:455px;transform:scaleX(0.9004);">0x58024500</div><div class="st" style="left:1218.0px;top:455px;transform:scaleX(0.9130);">0x1e03c023</div>
<div class="rr" style="top:471px"></div><div class="abs" style="left:963px;top:476.5px"><svg class="ch" width="7" height="10" viewBox="0 0 7 10"><path d="M0.7 1.2 L4.5 4.9 L0.7 8.6" fill="none" stroke="#8a8a8a" stroke-width="1.5"/></svg></div><div class="abs" style="left:975px;top:474px"><svg class="ri" width="17" height="13" viewBox="0 0 17 13"><g font-family="Liberation Sans" font-size="7" font-weight="bold" fill="#1c315e" stroke="#1c315e" stroke-width="0.25"><text x="0" y="5" textLength="15.4" lengthAdjust="spacingAndGlyphs">1010</text><text x="0" y="11.6" textLength="15.4" lengthAdjust="spacingAndGlyphs">0101</text></g></svg></div><div class="st" style="left:994.5px;top:473px;transform:scaleX(0.8996);">C1_AHB1LPENR</div><div class="st" style="left:1128.1px;top:473px;transform:scaleX(0.9004);">0x58024560</div><div class="st" style="left:1218.0px;top:473px;transform:scaleX(0.9130);">0x1e03c023</div>
<div class="rr" style="top:489px"></div><div class="abs" style="left:963px;top:494.5px"><svg class="ch" width="7" height="10" viewBox="0 0 7 10"><path d="M0.7 1.2 L4.5 4.9 L0.7 8.6" fill="none" stroke="#8a8a8a" stroke-width="1.5"/></svg></div><div class="abs" style="left:975px;top:492px"><svg class="ri" width="17" height="13" viewBox="0 0 17 13"><g font-family="Liberation Sans" font-size="7" font-weight="bold" fill="#1c315e" stroke="#1c315e" stroke-width="0.25"><text x="0" y="5" textLength="15.4" lengthAdjust="spacingAndGlyphs">1010</text><text x="0" y="11.6" textLength="15.4" lengthAdjust="spacingAndGlyphs">0101</text></g></svg></div><div class="st" style="left:994.5px;top:491px;transform:scaleX(0.8996);">C1_AHB2LPENR</div><div class="st" style="left:1128.1px;top:491px;transform:scaleX(0.9004);">0x58024564</div><div class="st" style="left:1218.0px;top:491px;transform:scaleX(0.9035);">0xe0000271</div>
<div class="rr" style="top:507px"></div><div class="abs" style="left:963px;top:512.5px"><svg class="ch" width="7" height="10" viewBox="0 0 7 10"><path d="M0.7 1.2 L4.5 4.9 L0.7 8.6" fill="none" stroke="#8a8a8a" stroke-width="1.5"/></svg></div><div class="abs" style="left:975px;top:510px"><svg class="ri" width="17" height="13" viewBox="0 0 17 13"><g font-family="Liberation Sans" font-size="7" font-weight="bold" fill="#1c315e" stroke="#1c315e" stroke-width="0.25"><text x="0" y="5" textLength="15.4" lengthAdjust="spacingAndGlyphs">1010</text><text x="0" y="11.6" textLength="15.4" lengthAdjust="spacingAndGlyphs">0101</text></g></svg></div><div class="st" style="left:994.5px;top:509px;transform:scaleX(0.9247);">AHB2LPENR</div><div class="st" style="left:1128.1px;top:509px;transform:scaleX(0.9004);">0x58024504</div><div class="st" style="left:1218.0px;top:509px;transform:scaleX(0.9035);">0xe0000271</div>
<div class="rr" style="top:525px"></div><div class="abs" style="left:963px;top:530.5px"><svg class="ch" width="7" height="10" viewBox="0 0 7 10"><path d="M0.7 1.2 L4.5 4.9 L0.7 8.6" fill="none" stroke="#8a8a8a" stroke-width="1.5"/></svg></div><div class="abs" style="left:975px;top:528px"><svg class="ri" width="17" height="13" viewBox="0 0 17 13"><g font-family="Liberation Sans" font-size="7" font-weight="bold" fill="#1c315e" stroke="#1c315e" stroke-width="0.25"><text x="0" y="5" textLength="15.4" lengthAdjust="spacingAndGlyphs">1010</text><text x="0" y="11.6" textLength="15.4" lengthAdjust="spacingAndGlyphs">0101</text></g></svg></div><div class="st" style="left:994.5px;top:527px;transform:scaleX(0.9247);">AHB4LPENR</div><div class="st" style="left:1128.1px;top:527px;transform:scaleX(0.9004);">0x58024508</div><div class="st" style="left:1218.0px;top:527px;transform:scaleX(0.9413);">0x312807ff</div>
<div class="rr" style="top:543px"></div><div class="abs" style="left:963px;top:548.5px"><svg class="ch" width="7" height="10" viewBox="0 0 7 10"><path d="M0.7 1.2 L4.5 4.9 L0.7 8.6" fill="none" stroke="#8a8a8a" stroke-width="1.5"/></svg></div><div class="abs" style="left:975px;top:546px"><svg class="ri" width="17" height="13" viewBox="0 0 17 13"><g font-family="Liberation Sans" font-size="7" font-weight="bold" fill="#1c315e" stroke="#1c315e" stroke-width="0.25"><text x="0" y="5" textLength="15.4" lengthAdjust="spacingAndGlyphs">1010</text><text x="0" y="11.6" textLength="15.4" lengthAdjust="spacingAndGlyphs">0101</text></g></svg></div><div class="st" style="left:994.5px;top:545px;transform:scaleX(0.8996);">C1_AHB4LPENR</div><div class="st" style="left:1128.1px;top:545px;transform:scaleX(0.9004);">0x58024568</div><div class="st" style="left:1218.0px;top:545px;transform:scaleX(0.9413);">0x312807ff</div>
<div class="rr" style="top:561px"></div><div class="abs" style="left:963px;top:566.5px"><svg class="ch" width="7" height="10" viewBox="0 0 7 10"><path d="M0.7 1.2 L4.5 4.9 L0.7 8.6" fill="none" stroke="#8a8a8a" stroke-width="1.5"/></svg></div><div class="abs" style="left:975px;top:564px"><svg class="ri" width="17" height="13" viewBox="0 0 17 13"><g font-family="Liberation Sans" font-size="7" font-weight="bold" fill="#1c315e" stroke="#1c315e" stroke-width="0.25"><text x="0" y="5" textLength="15.4" lengthAdjust="spacingAndGlyphs">1010</text><text x="0" y="11.6" textLength="15.4" lengthAdjust="spacingAndGlyphs">0101</text></g></svg></div><div class="st" style="left:994.5px;top:563px;transform:scaleX(0.8844);">C1_APB3LPENR</div><div class="st" style="left:1128.1px;top:563px;transform:scaleX(0.9099);">0x5802456c</div><div class="st" style="left:1218.0px;top:563px;transform:scaleX(0.9104);">0x28</div>
<div class="vl" style="left:1122px"></div>
<div class="vl" style="left:1212px"></div>
<div class="vl" style="left:1342px"></div>
</div>

<div id="redbox"><div id="redin">
<div class="abs" style="left:923px;top:380px;width:479px;height:1px;background:#e6e6e6"></div><div class="rr sel" style="top:381px"></div><div class="abs" style="left:963px;top:386.5px"><svg class="ch" width="7" height="10" viewBox="0 0 7 10"><path d="M0.7 1.2 L4.5 4.9 L0.7 8.6" fill="none" stroke="#8a8a8a" stroke-width="1.5"/></svg></div><div class="abs" style="left:975px;top:384px"><svg class="ri" width="17" height="13" viewBox="0 0 17 13"><g font-family="Liberation Sans" font-size="7" font-weight="bold" fill="#1c315e" stroke="#1c315e" stroke-width="0.25"><text x="0" y="5" textLength="15.4" lengthAdjust="spacingAndGlyphs">1010</text><text x="0" y="11.6" textLength="15.4" lengthAdjust="spacingAndGlyphs">0101</text></g></svg></div><div class="st" style="left:994.5px;top:383px;transform:scaleX(0.9102);">APB4ENR</div><div class="st" style="left:1128.1px;top:383px;transform:scaleX(0.9166);">0x580244f4</div><div class="st" style="left:1218.0px;top:383px;transform:scaleX(0.9056);">0x10002</div><div class="rr yel" style="top:399px"></div><div class="abs" style="left:963px;top:404.5px"><svg class="ch" width="7" height="10" viewBox="0 0 7 10"><path d="M0.7 1.2 L4.5 4.9 L0.7 8.6" fill="none" stroke="#8a8a8a" stroke-width="1.5"/></svg></div><div class="abs" style="left:975px;top:402px"><svg class="ri" width="17" height="13" viewBox="0 0 17 13"><g font-family="Liberation Sans" font-size="7" font-weight="bold" fill="#1c315e" stroke="#1c315e" stroke-width="0.25"><text x="0" y="5" textLength="15.4" lengthAdjust="spacingAndGlyphs">1010</text><text x="0" y="11.6" textLength="15.4" lengthAdjust="spacingAndGlyphs">0101</text></g></svg></div><div class="st" style="left:994.5px;top:401px;transform:scaleX(0.8841);">C1_APB4ENR</div><div class="st" style="left:1128.1px;top:401px;transform:scaleX(0.9004);">0x58024554</div><div class="st" style="left:1218.0px;top:401px;transform:scaleX(0.9056);">0x10002</div>
<div class="vl" style="left:1122px"></div>
<div class="vl" style="left:1212px"></div>
<div class="vl" style="left:1342px"></div>
</div></div>

<div id="redfr"></div>
<div id="bitrow"></div>
<div class="bit" style="left:1045.0px">0</div>
<div class="bit" style="left:1060.0px">0</div>
<div class="bit" style="left:1075.0px">0</div>
<div class="bit" style="left:1090.0px">0</div>
<div class="bit" style="left:1105.0px">0</div>
<div class="bit" style="left:1120.0px">0</div>
<div class="bit" style="left:1135.0px">0</div>
<div class="bit" style="left:1150.0px">0</div>
<div class="bit" style="left:1168.0px">0</div>
<div class="bit" style="left:1183.0px">0</div>
<div class="bit en" style="left:1198.0px">0</div>
<div class="bit" style="left:1213.0px">0</div>
<div class="bit" style="left:1228.0px">0</div>
<div class="bit" style="left:1243.0px">0</div>
<div class="bit" style="left:1258.0px">0</div>
<div class="bit en" style="left:1273.0px">1</div>
<div class="bit en" style="left:1291.1px">0</div>
<div class="bit en" style="left:1306.1px">0</div>
<div class="bit" style="left:1321.1px">0</div>
<div class="bit en" style="left:1336.1px">0</div>
<div class="bit en" style="left:1351.1px">0</div>
<div class="bit en" style="left:1366.1px">0</div>
<div class="bit en" style="left:1381.1px">0</div>
<div class="bit" style="left:1396.1px">0</div>

<div id="det"></div><div id="det2"></div>
<div class="st" style="left:926.7px;top:606px;transform:scaleX(0.9494);">Register:</div>
<div class="st" style="left:1031.8px;top:606px;transform:scaleX(0.9066);">APB4ENR</div>
<div class="st" style="left:926.7px;top:621px;transform:scaleX(0.9523);">Address:</div>
<div class="st" style="left:1031.8px;top:621px;transform:scaleX(0.9341);">0x580244f4</div>
<div class="st" style="left:926.7px;top:636px;transform:scaleX(0.9475);">Value:</div>
<div class="st" style="left:1031.8px;top:636px;transform:scaleX(0.9230);">0x10002</div>
<div class="st" style="left:926.7px;top:651px;transform:scaleX(0.8806);">Size:</div>
<div class="st" style="left:1031.8px;top:651px;transform:scaleX(0.9656);">32</div>
<div class="st" style="left:926.7px;top:666px;transform:scaleX(0.9325);">Reset value:</div>
<div class="st" style="left:1031.8px;top:666px;transform:scaleX(0.9711);">0x0</div>
<div class="st" style="left:926.7px;top:681px;transform:scaleX(0.9327);">Reset mask:</div>
<div class="st" style="left:1031.8px;top:681px;transform:scaleX(0.8524);">0xFFFFFFFF</div>
<div class="st" style="left:926.7px;top:696px;transform:scaleX(0.9732);">Access permission:</div>
<div class="st" style="left:1031.8px;top:696px;transform:scaleX(0.9504);">RW</div>
<div class="st" style="left:926.7px;top:711px;transform:scaleX(0.9690);">Read action:</div>
<div class="st" style="left:926.7px;top:741px;transform:scaleX(1.0006);">Description:</div>
<div class="st" style="left:926.7px;top:756px;transform:scaleX(0.9437);">RCC APB4 Clock Register</div>
<div class="st" style="left:34.5px;top:-2px;transform:scaleX(1.0129);">main.c</div>
<div class="st" style="left:119.5px;top:-2px;transform:scaleX(0.9633);">startup_stm32h753zitx.s</div>
<div class="st" style="left:294.1px;top:-2px;transform:scaleX(0.9294);">0x8003268</div>
<div class="st" style="left:398.0px;top:-2px;transform:scaleX(0.9754);">stm32h7xx_hal.h</div>
<div class="st" style="left:535.0px;top:-2px;transform:scaleX(0.9768);">stm32h753xx.h</div>
<svg class="abs" style="left:924px;top:0" width="20" height="12" viewBox="0 0 20 12"><text x="0.8" y="7.3" font-family="Liberation Sans" font-size="10" font-weight="bold" fill="#3a8ad0" textLength="16.6" lengthAdjust="spacingAndGlyphs">(x)=</text></svg>
<div class="st" style="left:944.5px;top:-2px;transform:scaleX(0.9422);">Variables</div>
<div class="st" style="left:1020.9px;top:-2px;transform:scaleX(0.9720);">Breakpoints</div>
<div class="st" style="left:1113.0px;top:-2px;transform:scaleX(0.9346);">Expressions</div>
<div class="st" style="left:1204.1px;top:-2px;transform:scaleX(0.9468);">Disassembly</div>
<div class="st" style="left:1298.1px;top:-2px;transform:scaleX(0.9154);">Registers</div>
<div class="st" style="left:1374.9px;top:-2px;transform:scaleX(0.9500);">Live Expressions</div>
<div class="st" style="left:924.7px;top:43px;transform:scaleX(0.9811);">All registers</div>
<div class="st" style="left:928.7px;top:65px;transform:scaleX(1.0340);color:#6a6a6a">type filter text</div>
<div class="st" style="left:928.7px;top:92px;transform:scaleX(0.9510);">Register</div>
<div class="st" style="left:1128.8px;top:92px;transform:scaleX(0.9607);">Address</div>
<div class="st" style="left:1218.5px;top:92px;transform:scaleX(0.9727);">Value</div>
<div class="st" style="left:1016.5px;top:580px;transform:scaleX(0.9494);">MSB</div>

</div>
</body>
</html>
